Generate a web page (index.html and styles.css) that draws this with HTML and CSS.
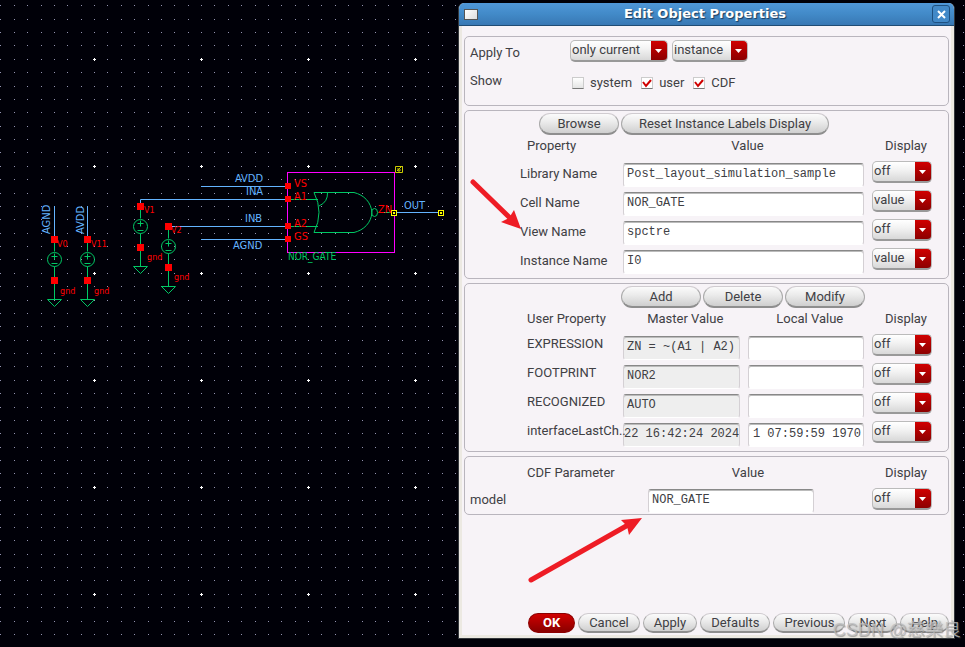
FILE: index.html
```html
<!DOCTYPE html>
<html lang="en">
<head>
    <meta charset="UTF-8">
    <meta name="viewport" content="width=device-width, initial-scale=1.0">
    <title>Edit Object Properties</title>
    <link rel="stylesheet" href="styles.css">
</head>
<body>
    <div class="desktop">
        <svg class="schematic" role="img" aria-label="NOR gate test schematic">
            <defs>
                <pattern id="grid" x="93" y="58" width="107" height="107" patternUnits="userSpaceOnUse">
                    <g stroke="#9494b0" stroke-dasharray="1 12 1 13 1 12 1 13 1 12 1 12 1 13 1 12">
                        <path d="M1 1.5h106M1 14.5h106M1 28.5h106M1 41.5h106M1 54.5h106M1 68.5h106M1 81.5h106M1 94.5h106"/>
                    </g>
                    <path d="M0 1h3v1H0zM1 0h1v3H1z" fill="#fff"/>
                </pattern>
                <!-- voltage source with its ground, origin at the upper pin -->
                <g id="source">
                    <path d="M0 0V12M0 27V60M-7 60H7L0 67ZM-3 17H3M0 14V20M-3 24H3" fill="none" stroke="#00c864"/>
                    <circle cx="0" cy="20" r="7" fill="none" stroke="#00c864"/>
                    <path d="M-3.500 -3.500h7v7h-7zM-3.500 37.500h7v7h-7z" fill="#f00"/>
                </g>
                <g id="pin">
                    <rect x="-3" y="-3" width="6" height="6" fill="#ff0"/>
                    <rect x="-1.500" y="-1.500" width="3" height="3" fill="none" stroke="#000"/>
                </g>
            </defs>
            <rect width="100%" height="100%" fill="url(#grid)"/>

            <g class="wire">
                <path d="M54.5 206V237M87.5 206V237M140.5 206V199.5H288M168 226.5H288M201 186.5H288M201 239.5H288M395 212.5H440"/>
            </g>
            <use href="#source" x="54.5" y="239.5"/>
            <use href="#source" x="87.5" y="239.5"/>
            <use href="#source" x="140.5" y="206.5"/>
            <use href="#source" x="168.5" y="226.5"/>

            <g class="gate">
                <path d="M288 199.5H318M288 226.5H318M378 212.5H392"/>
                <path d="M314 192.5H354C364 195 371 202 372 212.5C371 223 364 230 354 232.5H314Q324 212 314 192.5ZM327.5 192.5Q328 202 319 206"/>
                <ellipse cx="374.5" cy="212.5" rx="3" ry="4"/>
            </g>
            <rect class="outline" x="287.5" y="172.5" width="107" height="80"/>
            <path d="M285 183h6v6h-6zM285 196h6v6h-6zM285 223h6v6h-6zM285 236h6v6h-6z" fill="#f00"/>
            <use href="#pin" x="394" y="213"/>
            <use href="#pin" x="441" y="213"/>
            <path d="M395.500 166.500h7v6h-7zM397 171l4-4M398 168v3h2v-2" fill="none" stroke="#cc0"/>

            <g class="net">
                <text x="235" y="182">AVDD</text>
                <text x="246" y="195">INA</text>
                <text x="245" y="222">INB</text>
                <text x="233" y="249">AGND</text>
                <text x="404" y="209">OUT</text>
                <text transform="translate(50 234) rotate(-90)">AGND</text>
                <text transform="translate(84 234) rotate(-90)">AVDD</text>
            </g>
            <g class="pin-name">
                <text x="294" y="187">VS</text>
                <text x="294" y="200">A1</text>
                <text x="294" y="227">A2</text>
                <text x="294" y="240">GS</text>
                <text x="378" y="213">ZN</text>
            </g>
            <g class="source-name">
                <text x="57" y="247">V0</text>
                <text x="91" y="247">V11</text>
                <text x="144" y="213">V1</text>
                <text x="171" y="233">V2</text>
                <text x="60" y="294">gnd</text>
                <text x="94" y="294">gnd</text>
                <text x="147" y="260">gnd</text>
                <text x="174" y="280">gnd</text>
            </g>
            <text class="cell-name" x="288" y="260">NOR_GATE</text>
        </svg>

        <form class="dialog">
            <header class="titlebar">
                <span class="window-icon"></span>
                <h1>Edit Object Properties</h1>
                <button type="button" class="close" aria-label="Close">
                    <svg width="9" height="9" viewBox="0 0 9 9"><path d="M1 1L8 8M8 1L1 8" stroke="#fff" stroke-width="2"/></svg>
                </button>
            </header>

            <div class="content">
                <section class="panel scope">
                    <label for="applyTo">Apply To</label>
                    <div class="choices">
                        <select id="applyTo" class="wide"><option>only current</option></select>
                        <select class="medium" aria-label="Object type"><option>instance</option></select>
                    </div>
                    <span>Show</span>
                    <div class="checks">
                        <label><input type="checkbox"> system</label>
                        <label><input type="checkbox" checked> user</label>
                        <label><input type="checkbox" checked> CDF</label>
                    </div>
                </section>

                <section class="panel">
                    <div class="buttons browse">
                        <button type="button">Browse</button>
                        <button type="button" class="long">Reset Instance Labels Display</button>
                    </div>
                    <table class="properties">
                        <thead>
                            <tr><th class="name">Property</th><th>Value</th><th class="display">Display</th></tr>
                        </thead>
                        <tbody>
                            <tr>
                                <td><label for="lib">Library Name</label></td>
                                <td><input type="text" id="lib" value="Post_layout_simulation_sample"></td>
                                <td><select aria-label="Library Name display"><option>off</option></select></td>
                            </tr>
                            <tr>
                                <td><label for="cell">Cell Name</label></td>
                                <td><input type="text" id="cell" value="NOR_GATE"></td>
                                <td><select aria-label="Cell Name display"><option>value</option></select></td>
                            </tr>
                            <tr>
                                <td><label for="view">View Name</label></td>
                                <td><input type="text" id="view" value="spctre"></td>
                                <td><select aria-label="View Name display"><option>off</option></select></td>
                            </tr>
                            <tr>
                                <td><label for="inst">Instance Name</label></td>
                                <td><input type="text" id="inst" value="I0"></td>
                                <td><select aria-label="Instance Name display"><option>value</option></select></td>
                            </tr>
                        </tbody>
                    </table>
                </section>

                <section class="panel">
                    <div class="buttons edit">
                        <button type="button">Add</button>
                        <button type="button">Delete</button>
                        <button type="button">Modify</button>
                    </div>
                    <table class="user-properties">
                        <thead>
                            <tr><th class="name">User Property</th><th>Master Value</th><th>Local Value</th><th class="display">Display</th></tr>
                        </thead>
                        <tbody>
                            <tr>
                                <td>EXPRESSION</td>
                                <td><input type="text" value="ZN = ~(A1 | A2)" readonly aria-label="EXPRESSION master value"></td>
                                <td><input type="text" aria-label="EXPRESSION local value"></td>
                                <td><select aria-label="EXPRESSION display"><option>off</option></select></td>
                            </tr>
                            <tr>
                                <td>FOOTPRINT</td>
                                <td><input type="text" value="NOR2" readonly aria-label="FOOTPRINT master value"></td>
                                <td><input type="text" aria-label="FOOTPRINT local value"></td>
                                <td><select aria-label="FOOTPRINT display"><option>off</option></select></td>
                            </tr>
                            <tr>
                                <td>RECOGNIZED</td>
                                <td><input type="text" value="AUTO" readonly aria-label="RECOGNIZED master value"></td>
                                <td><input type="text" aria-label="RECOGNIZED local value"></td>
                                <td><select aria-label="RECOGNIZED display"><option>off</option></select></td>
                            </tr>
                            <tr>
                                <td>interfaceLastCh..</td>
                                <td><input type="text" class="date" value="22 16:42:24 2024" readonly aria-label="interfaceLastChanged master value"></td>
                                <td><input type="text" class="date" value="1 07:59:59 1970" aria-label="interfaceLastChanged local value"></td>
                                <td><select aria-label="interfaceLastChanged display"><option>off</option></select></td>
                            </tr>
                        </tbody>
                    </table>
                </section>

                <section class="panel">
                    <table class="cdf">
                        <thead>
                            <tr><th class="name">CDF Parameter</th><th>Value</th><th class="display">Display</th></tr>
                        </thead>
                        <tbody>
                            <tr>
                                <td><label for="model">model</label></td>
                                <td><input type="text" id="model" value="NOR_GATE"></td>
                                <td><select aria-label="model display"><option>off</option></select></td>
                            </tr>
                        </tbody>
                    </table>
                </section>

                <footer class="actions">
                    <button type="submit" class="ok">OK</button>
                    <button type="button">Cancel</button>
                    <button type="button">Apply</button>
                    <button type="button">Defaults</button>
                    <button type="button">Previous</button>
                    <button type="button">Next</button>
                    <button type="button">Help</button>
                </footer>
            </div>
        </form>

        <svg class="notes" aria-hidden="true">
            <g stroke="#ee1c25" stroke-width="5" stroke-linecap="round">
                <path d="M473 182L510 218M531 580L628 525"/>
            </g>
            <path d="M521 229L501 222L509 218L514 210ZM642 518L621 520L627 526L629 535Z" fill="#ee1c25"/>
        </svg>
        <span class="watermark">CSDN @慈樂良</span>
    </div>
</body>
</html>
```

FILE: styles.css
```css
* {
    box-sizing: border-box;
}
body {
    margin: 0;
    background-color: #000008;
    color: #404044;
    font-family: Roboto, "Liberation Sans", Arial, sans-serif;
    font-size: 13px;
    line-height: 16px;
}
.desktop {
    position: relative;
    display: flex;
    min-height: 100vh;
    padding: 3px 10px 8px 458px;
}

/* schematic */
.schematic, .notes {
    position: absolute;
    top: 0;
    left: 0;
    width: 100%;
    height: 100%;
}
.notes {
    pointer-events: none;
}
.schematic {
    font-family: "Liberation Sans Narrow", "DejaVu Sans Condensed", sans-serif;
    font-size: 11px;
}
.wire {
    fill: none;
    stroke: #64b4ff;
}
.gate {
    fill: none;
    stroke: #00c864;
}
.outline {
    fill: none;
    stroke: #f0f;
}
.net {
    fill: #64b4ff;
}
.pin-name, .source-name {
    fill: #f00;
}
.source-name {
    font-size: 9px;
}
.cell-name {
    fill: #00c864;
    font-size: 10px;
}

/* dialog window */
.dialog {
    position: relative;
    flex: 1;
    display: flex;
    flex-direction: column;
    border: 1px solid #34383c;
    border-top: 0;
    border-radius: 6px 6px 0 0;
    background-color: #f7f3f7;
    overflow: hidden;
}
.titlebar {
    display: flex;
    align-items: center;
    height: 23px;
    padding: 0 4px 0 5px;
    background: linear-gradient(#4f97d8, #428ac8 50%, #3878b4);
    border-bottom: 1px solid #204c74;
}
.titlebar h1 {
    flex: 1;
    margin: 0;
    color: #fff;
    font-family: "DejaVu Sans", sans-serif;
    font-size: 13px;
    text-align: center;
    text-shadow: 1px 1px 1px #1c3c5c;
}
.window-icon {
    width: 14px;
    height: 11px;
    border: 1px solid #555;
    background: linear-gradient(135deg, #fff, #ddd);
}
.close {
    display: flex;
    align-items: center;
    justify-content: center;
    width: 18px;
    height: 18px;
    padding: 0;
    border: 1px solid #1f5080;
    border-radius: 3px;
    background: #4289c8;
}
.content {
    flex: 1;
    display: flex;
    flex-direction: column;
    gap: 4px;
    padding: 10px 2px 2px 2px;
    border: 3px solid #ece9e2;
    border-top: 0;
}
.panel {
    border: 1px solid #b9b5bd;
    border-radius: 5px;
}

/* controls */
button {
    height: 22px;
    padding: 0 8px;
    border: 1px solid #aaa;
    border-top-color: #d0ccd0;
    border-bottom: 2px solid #8e8e8e;
    border-radius: 11px;
    background: linear-gradient(#fbfbfb, #ececec 40%, #cfcfcf);
    color: #404044;
    font: inherit;
}
select {
    appearance: none;
    display: block;
    width: 60px;
    height: 22px;
    padding: 0 0 1px 1px;
    border: 1px solid #bbb;
    border-bottom: 2px solid #999;
    border-radius: 5px;
    background:
        url("data:image/svg+xml,%3Csvg xmlns='http://www.w3.org/2000/svg' width='7' height='4'%3E%3Cpath d='M0 0h7L3.500 4z' fill='white'/%3E%3C/svg%3E") right 5px center no-repeat,
        linear-gradient(#d00000, #8c0000) right / 16px 100% no-repeat,
        linear-gradient(#fff, #f3f3f3 40%, #d8d8d8);
    color: #404044;
    font: inherit;
}
input[type="text"] {
    display: block;
    width: 100%;
    height: 24px;
    padding: 0 3px 2px;
    border: 1px solid #d4d0d4;
    border-top: 1px solid #888;
    border-bottom-color: #fff;
    border-radius: 3px;
    background-color: #fff;
    box-shadow: inset 0 1px 0 #bbb;
    color: #404044;
    font-family: "Liberation Mono", "Courier New", monospace;
    font-size: 12px;
}
input[type="text"]:read-only {
    background-color: #eee;
}
input[type="text"].date {
    padding: 0 2px 2px 0;
    text-align: right;
}
input[type="text"].date:read-only {
    padding-right: 0;
}
input[type="checkbox"] {
    appearance: none;
    width: 12px;
    height: 12px;
    margin: 0;
    border: 1px solid #ccc;
    border-bottom-color: #777;
    background: linear-gradient(#fff, #e4e4e4);
}
input[type="checkbox"]:checked {
    background: url("data:image/svg+xml,%3Csvg xmlns='http://www.w3.org/2000/svg' width='10' height='10'%3E%3Cpath d='M1 4L4 8L9 2' fill='none' stroke='%23d00000' stroke-width='2'/%3E%3C/svg%3E") center no-repeat #fff;
}

/* apply to / show */
.scope {
    display: grid;
    grid-template-columns: 100px 1fr;
    align-content: start;
    row-gap: 11px;
    height: 70px;
    padding: 3px 5px;
}
.scope > label {
    padding-top: 5px;
}
.choices, .checks, .checks label {
    display: flex;
}
.choices {
    gap: 4px;
}
.checks {
    gap: 9px;
    padding: 2px 2px 0;
}
.checks label {
    align-items: center;
    gap: 6px;
}
.wide {
    width: 98px;
}
.medium {
    width: 76px;
}

/* property tables */
.buttons {
    display: flex;
    gap: 2px;
    padding: 2px 0 0 156px;
}
.buttons button {
    width: 80px;
}
.buttons.browse {
    padding-left: 74px;
}
.buttons .long {
    width: 208px;
}
table {
    width: 100%;
    table-layout: fixed;
    border-collapse: collapse;
}
th {
    height: 24px;
    padding: 3px 0 0;
    font-weight: normal;
    vertical-align: top;
}
th.name {
    width: 158px;
    padding-left: 62px;
    text-align: left;
}
th.display {
    width: 76px;
    padding-right: 8px;
}
td {
    height: 29px;
    padding: 4px 8px 0 0;
    vertical-align: top;
}
td:first-child {
    padding: 7px 0 0 55px;
}
td:last-child {
    padding-top: 2px;
}
.properties {
    margin-bottom: 3px;
}
.user-properties {
    margin-bottom: 3px;
}
.user-properties td:first-child {
    padding: 4px 0 0 62px;
}
.cdf th {
    height: 29px;
    padding-top: 8px;
    padding-right: 24px;
}
.cdf th.name {
    width: 183px;
    padding-right: 0;
}
.cdf th.display {
    width: 76px;
    padding-right: 8px;
}
.cdf td {
    height: 28px;
    padding: 3px 58px 0 0;
}
.cdf td:first-child {
    padding: 6px 0 0 5px;
}
.cdf td:last-child {
    padding: 2px 0 0;
}

/* footer */
.actions {
    display: flex;
    justify-content: flex-end;
    gap: 3px;
    margin-top: auto;
}
.actions button {
    height: 20px;
    padding: 0 10px;
}
.actions .ok {
    width: 47px;
    border-color: #8c0000;
    background: linear-gradient(#d00000, #8c0000);
    color: #fff;
    font-weight: bold;
}

.watermark {
    position: absolute;
    right: 4px;
    bottom: 5px;
    color: rgba(190, 190, 190, 0.8);
    font-family: "Liberation Sans", "Noto Sans CJK TC", sans-serif;
    font-size: 18px;
    line-height: 24px;
    text-shadow: 1px 1px 1px rgba(90, 90, 90, 0.5);
}
```
